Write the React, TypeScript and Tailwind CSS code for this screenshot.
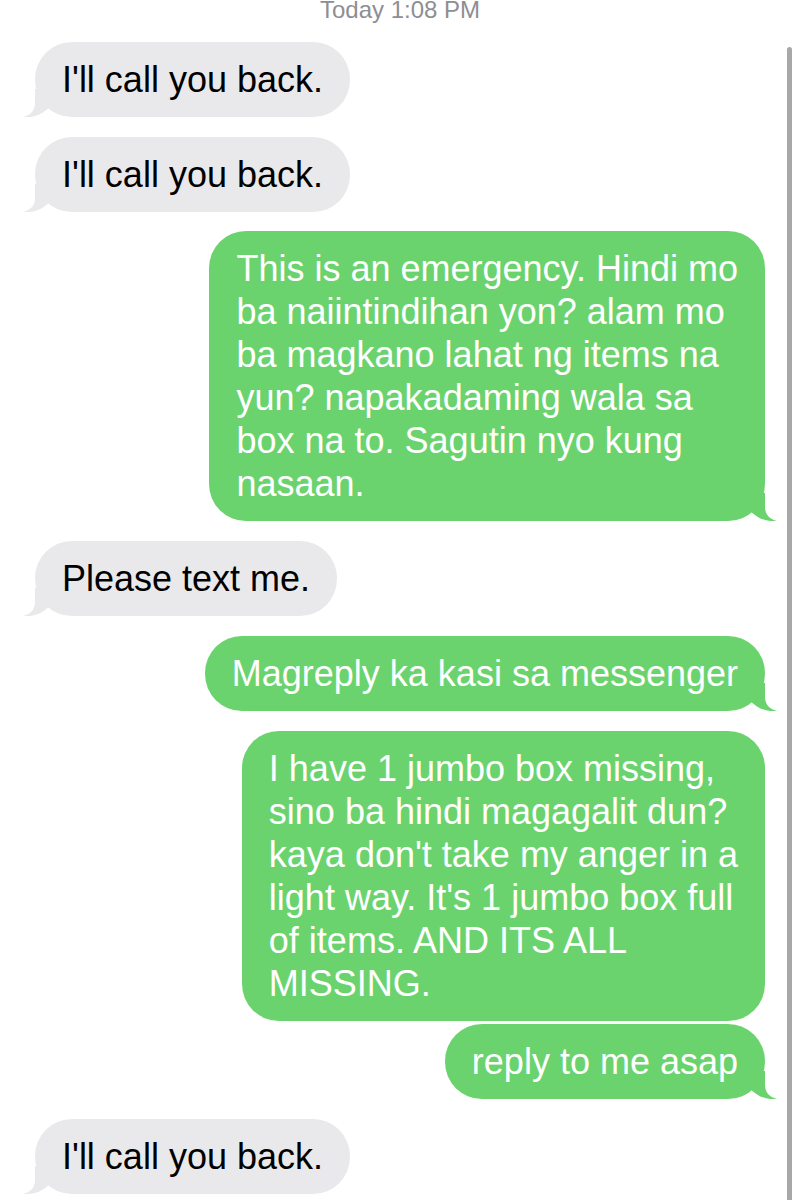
import type { ReactNode } from "react";

type Lado = "entrada" | "salida";

interface Mensaje {
  id: number;
  lado: Lado;
  lineas: string[];
  cola: boolean;
  separacion: string;
}

const mensajes: Mensaje[] = [
  { id: 1, lado: "entrada", lineas: ["I'll call you back."], cola: true, separacion: "mt-[20px]" },
  { id: 2, lado: "entrada", lineas: ["I'll call you back."], cola: true, separacion: "mt-[20px]" },
  {
    id: 3,
    lado: "salida",
    lineas: [
      "This is an emergency. Hindi mo",
      "ba naiintindihan yon? alam mo",
      "ba magkano lahat ng items na",
      "yun? napakadaming wala sa",
      "box na to. Sagutin nyo kung",
      "nasaan.",
    ],
    cola: true,
    separacion: "mt-[19px]",
  },
  { id: 4, lado: "entrada", lineas: ["Please text me."], cola: true, separacion: "mt-[20px]" },
  { id: 5, lado: "salida", lineas: ["Magreply ka kasi sa messenger"], cola: true, separacion: "mt-[20px]" },
  {
    id: 6,
    lado: "salida",
    lineas: [
      "I have 1 jumbo box missing,",
      "sino ba hindi magagalit dun?",
      "kaya don't take my anger in a",
      "light way. It's 1 jumbo box full",
      "of items. AND ITS ALL",
      "MISSING.",
    ],
    cola: false,
    separacion: "mt-[20px]",
  },
  { id: 7, lado: "salida", lineas: ["reply to me asap"], cola: true, separacion: "mt-[3px]" },
  { id: 8, lado: "entrada", lineas: ["I'll call you back."], cola: true, separacion: "mt-[20px]" },
];

// ── Cola de la burbuja ───────────────────────────────────────────────────────

function Cola({ lado }: { lado: Lado }) {
  if (lado === "entrada") {
    return (
      <svg
        className="absolute bottom-0 left-[-12px] h-[28px] w-[30px]"
        viewBox="0 0 30 28"
        fill="#e9e9eb"
      >
        <path d="M12 0 L12 14 C12 21 8 26 0 28 C7 28.6 14 27.4 20 23.5 L30 16 L30 0 Z" />
      </svg>
    );
  }
  return (
    <svg
      className="absolute bottom-0 right-[-12px] h-[28px] w-[30px]"
      viewBox="0 0 30 28"
      fill="#6bd36e"
    >
      <path d="M18 0 L18 14 C18 21 22 26 30 28 C23 28.6 16 27.4 10 23.5 L0 16 L0 0 Z" />
    </svg>
  );
}

function Burbuja({ m }: { m: Mensaje }) {
  const entrada = m.lado === "entrada";
  const contenido: ReactNode[] = [];
  m.lineas.forEach((l, i) => {
    if (i > 0) contenido.push(<br key={`br-${i}`} />);
    contenido.push(<span key={i}>{l}</span>);
  });

  return (
    <div
      className={`relative ${m.separacion} ${
        entrada ? "self-start ml-[35px]" : "self-end mr-[35px]"
      }`}
    >
      {m.cola && <Cola lado={m.lado} />}
      <div
        className={`relative rounded-[37px] px-[27px] py-[16px] text-[36px] leading-[43px] whitespace-nowrap ${
          entrada ? "bg-[#e9e9eb] text-black" : "bg-[#6bd36e] text-white"
        }`}
      >
        {contenido}
      </div>
    </div>
  );
}

export default function App() {
  return (
    <div
      className="relative h-[1200px] w-[800px] overflow-hidden bg-white"
      style={{ fontFamily: '"Liberation Sans", Arial, sans-serif' }}
    >
      <div className="flex flex-col">
        <div className="-mt-[2px] h-[24px] text-center text-[24px] leading-[24px] text-[#8e8e93]">
          Today 1:08 PM
        </div>
        {mensajes.map((m) => (
          <Burbuja key={m.id} m={m} />
        ))}
      </div>

      {/* indicador de desplazamiento */}
      <div className="absolute right-[8px] top-[47px] bottom-0 w-[5px] rounded-t-full bg-[#a8a8a8]" />
    </div>
  );
}
